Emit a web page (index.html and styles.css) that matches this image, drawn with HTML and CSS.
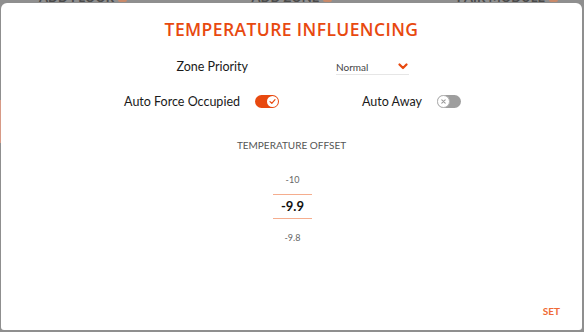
FILE: index.html
```html
<!DOCTYPE html>
<html>
<head>
<meta charset="utf-8">
<link rel="stylesheet" href="styles.css">
</head>
<body>
<div class="backdrop">
  <div class="bg-nav">
    <span class="bg-item">ADD FLOOR<i class="bg-dot"></i></span>
    <span class="bg-item">ADD ZONE<i class="bg-dot"></i></span>
    <span class="bg-item">PAIR MODULE<i class="bg-dot"></i></span>
  </div>
  <div class="bg-strip"></div>
</div>
<div class="dialog">
  <h1 class="title">TEMPERATURE INFLUENCING</h1>
  <div class="row row-priority">
    <span class="label">Zone Priority</span>
    <div class="select">
      <span class="select-value">Normal</span>
      <svg class="chev" width="10" height="7" viewBox="0 0 10 7"><path d="M1.5 1.5 L5 5 L8.5 1.5" fill="none" stroke="#e8490f" stroke-width="2.2" stroke-linecap="round" stroke-linejoin="round"/></svg>
    </div>
  </div>
  <div class="row row-toggles">
    <div class="toggle-group">
      <span class="label">Auto Force Occupied</span>
      <span class="toggle on">
        <span class="knob">
          <svg width="9" height="9" viewBox="0 0 9 9"><path d="M2 4.6 L3.8 6.3 L7 2.6" fill="none" stroke="#e8490f" stroke-width="1.2" stroke-linecap="round" stroke-linejoin="round"/></svg>
        </span>
      </span>
    </div>
    <div class="toggle-group">
      <span class="label">Auto Away</span>
      <span class="toggle off">
        <span class="knob">
          <svg width="9" height="9" viewBox="0 0 9 9"><path d="M2.8 2.8 L6.2 6.2 M6.2 2.8 L2.8 6.2" fill="none" stroke="#9a9a9a" stroke-width="1.1" stroke-linecap="round"/></svg>
        </span>
      </span>
    </div>
  </div>
  <div class="offset-title">TEMPERATURE OFFSET</div>
  <div class="picker">
    <div class="pick-item">-10</div>
    <div class="pick-item selected">-9.9</div>
    <div class="pick-item">-9.8</div>
  </div>
  <div class="actions">
    <span class="set">SET</span>
  </div>
</div>
</body>
</html>
```
FILE: styles.css
```css
html, body {
  margin: 0;
  padding: 0;
}
body {
  width: 584px;
  height: 332px;
  background: #8f8f8f;
  font-family: Lato, "Open Sans", sans-serif;
  overflow: hidden;
  position: relative;
}
.backdrop {
  position: absolute;
  inset: 0;
}
.bg-nav {
  display: flex;
  justify-content: space-between;
  padding: 0 26px 0 39px;
  margin-top: -11px;
  font-size: 13px;
  font-weight: 700;
  color: #4a4a4a;
}
.bg-item {
  display: flex;
  align-items: center;
  gap: 4px;
}
.bg-dot {
  display: inline-block;
  width: 9px;
  height: 9px;
  border-radius: 2px;
  background: #c98a6a;
}
.bg-strip {
  position: absolute;
  left: 0;
  top: 100px;
  width: 1px;
  height: 43px;
  background: #d79a86;
}
.dialog {
  position: absolute;
  left: 1px;
  top: 3px;
  width: 581px;
  height: 327px;
  background: #fff;
  border-radius: 6px 6px 3px 3px;
  box-sizing: border-box;
  display: flex;
  flex-direction: column;
  align-items: center;
}
.title {
  margin: 15px 0 0 0;
  color: #e8490f;
  line-height: 22px;
  font-family: "Open Sans", Lato, sans-serif;
  font-weight: 600;
  font-size: 17.5px;
  letter-spacing: 0.4px;
}
.row {
  display: flex;
  align-items: center;
}
.label {
  font-size: 12.5px;
  color: #1a1a1a;
}
.row-priority {
  margin-top: 17px;
  height: 18px;
}
.row-priority .label {
  width: 160px;
  text-align: right;
  margin-left: -86px;
}
.select {
  margin-left: 88px;
  width: 73px;
  display: flex;
  align-items: center;
  justify-content: space-between;
  border-bottom: 1px solid #e6e6e6;
  padding-bottom: 1px;
  margin-top: 3px;
}
.select-value {
  font-size: 10px;
  color: #444;
}
.chev {
  margin-right: 1px;
}
.row-toggles {
  margin-top: 17px;
  height: 18px;
  gap: 83px;
  margin-left: 2px;
}
.toggle-group {
  display: flex;
  align-items: center;
  gap: 15px;
}
.toggle {
  position: relative;
  width: 24px;
  height: 13px;
  border-radius: 7px;
  display: inline-block;
}
.toggle.on {
  background: #e8490f;
}
.toggle.off {
  background: #9e9e9e;
}
.knob {
  position: absolute;
  top: 1px;
  width: 11px;
  height: 11px;
  border-radius: 50%;
  background: #fff;
  display: flex;
  align-items: center;
  justify-content: center;
  box-sizing: border-box;
}
.toggle.on .knob {
  right: 1px;
}
.toggle.off .knob {
  left: 0;
  top: 0;
  width: 13px;
  height: 13px;
  border: 1px solid #b5b5b5;
}
.offset-title {
  margin-top: 29px;
  font-size: 10px;
  color: #555;
}
.picker {
  margin-top: 23px;
  display: flex;
  flex-direction: column;
  align-items: center;
  width: 39px;
  margin-left: 2px;
}
.pick-item {
  font-size: 9px;
  color: #666;
  line-height: 12px;
}
.pick-item.selected {
  width: 39px;
  text-align: center;
  font-size: 13px;
  font-weight: 700;
  color: #111;
  border-top: 1px solid #f5ad8e;
  border-bottom: 1px solid #f5ad8e;
  line-height: 23px;
  margin: 8px 0 13px 0;
}
.actions {
  margin-top: auto;
  align-self: stretch;
  display: flex;
  justify-content: flex-end;
  padding: 0 22px 13px 0;
}
.set {
  font-size: 10px;
  font-weight: 700;
  color: #f06a35;
}
```
